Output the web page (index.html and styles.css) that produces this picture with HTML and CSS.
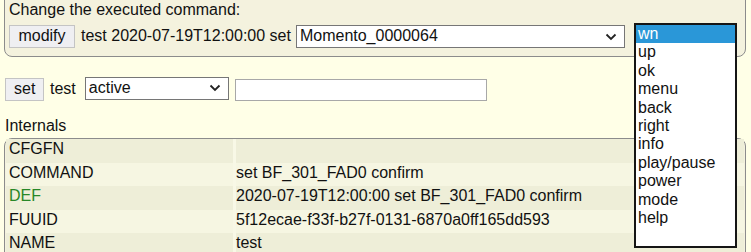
FILE: index.html
```html
<!DOCTYPE html>
<html>
<head>
<meta charset="utf-8">
<link rel="stylesheet" href="styles.css">
</head>
<body>
<div class="block top">
  <div class="line">Change the executed command:</div>
  <div class="row">
    <button class="btn btn-modify">modify</button>
    <span class="txt">test 2020-07-19T12:00:00 set</span>
    <div class="select sel-cmd"><span>Momento_0000064</span><svg class="chev" width="12" height="8" viewBox="0 0 12 8"><polyline points="1.5,1.5 6,6 10.5,1.5" fill="none" stroke="#222" stroke-width="1.8"/></svg></div>
  </div>
</div>

<div class="row setrow">
  <button class="btn btn-set">set</button>
  <span class="txt">test</span>
  <div class="select sel-active"><span>active</span><svg class="chev" width="12" height="8" viewBox="0 0 12 8"><polyline points="1.5,1.5 6,6 10.5,1.5" fill="none" stroke="#222" stroke-width="1.8"/></svg></div>
  <div class="input"></div>
</div>

<div class="label">Internals</div>
<table class="block internals">
  <tr class="odd"><td class="name">CFGFN</td><td class="val"></td></tr>
  <tr class="even"><td class="name">COMMAND</td><td class="val">set BF_301_FAD0 confirm</td></tr>
  <tr class="odd"><td class="name"><span class="link">DEF</span></td><td class="val">2020-07-19T12:00:00 set BF_301_FAD0 confirm</td></tr>
  <tr class="even"><td class="name">FUUID</td><td class="val">5f12ecae-f33f-b27f-0131-6870a0ff165dd593</td></tr>
  <tr class="odd"><td class="name">NAME</td><td class="val">test</td></tr>
</table>

<div class="dropdown">
  <div class="opt sel">wn</div>
  <div class="opt">up</div>
  <div class="opt">ok</div>
  <div class="opt">menu</div>
  <div class="opt">back</div>
  <div class="opt">right</div>
  <div class="opt">info</div>
  <div class="opt">play/pause</div>
  <div class="opt">power</div>
  <div class="opt">mode</div>
  <div class="opt">help</div>
</div>
</body>
</html>
```

FILE: styles.css
```css
html, body {
  margin: 0;
  padding: 0;
}
body {
  background: #FFFFE7;
  font-family: "Liberation Sans", Arial, sans-serif;
  font-size: 16px;
  line-height: 18.4px;
  color: #111;
  padding: 0 5px 0 4px;
  height: 252px;
  overflow: hidden;
  position: relative;
}
.block {
  border: 1px solid #8c8c8c;
  background: #F4F2DE;
  border-radius: 8px;
}
.top {
  margin-top: -11px;
  padding: 11px 3px 8px 4px;
}
.line {
  height: 18px;
}
.row {
  display: flex;
  align-items: center;
  margin-top: 6px;
}
.btn {
  font-family: inherit;
  font-size: 16px;
  line-height: 18.4px;
  height: 23px;
  padding: 0 8px;
  border: 1px solid #c4c4c4;
  background: #EFEFF2;
  color: #111;
  border-radius: 0;
  margin: 0;
}
.btn-modify {
  width: 66px;
}
.txt {
  margin-left: 6px;
}
.select {
  display: flex;
  align-items: center;
  justify-content: space-between;
  background: #fff;
  border: 1px solid #767676;
  height: 22px;
  box-sizing: border-box;
  padding: 0 7px 0 3px;
  margin-left: 5px;
}
.sel-cmd {
  width: 329px;
  height: 23px;
}
.setrow {
  margin-top: 20px;
  margin-left: 1px;
}
.btn-set {
  width: 39px;
}
.sel-active {
  width: 144px;
  height: 23px;
  margin-top: -2px;
  margin-left: 9px;
}
.input {
  width: 252px;
  height: 22px;
  box-sizing: border-box;
  border: 1px solid #a8a8a8;
  background: #fff;
  margin-left: 6px;
  margin-top: 2px;
}
.label {
  margin-top: 16px;
  margin-left: 1px;
  height: 21px;
}
.internals {
  width: 742px;
  border-collapse: separate;
  border-spacing: 0;
  border-bottom-left-radius: 0;
  border-bottom-right-radius: 0;
  padding: 0 1px;
}
.internals td {
  padding: 1px 2px 4px 2px;
  height: 18.6px;
  line-height: 18.4px;
  white-space: nowrap;
}
.internals tr.odd td {
  background: #EEEED8;
}
.internals tr.even td {
  background: #F6F6E2;
}
.internals td.name {
  width: 222px;
  padding-left: 3px;
}
.internals td.val {
  border-left: 3px solid #F8F8E6;
  padding-left: 0;
}
.link {
  color: #278727;
}
.dropdown {
  position: absolute;
  left: 634px;
  top: 23px;
  width: 99px;
  height: 221px;
  border: 2px solid #151515;
  background: #fff;
}
.opt {
  padding-left: 2px;
  line-height: 18.4px;
  height: 18.4px;
}
.opt.sel {
  background: #2A97D8;
  color: #fff;
}
```
